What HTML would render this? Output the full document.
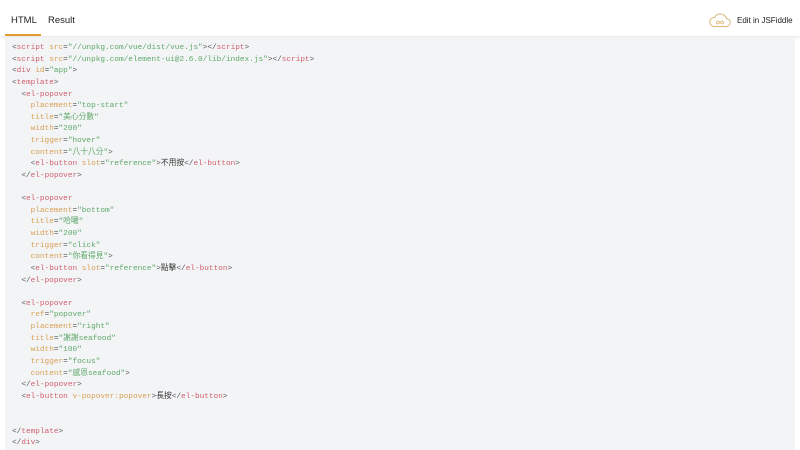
<!DOCTYPE html>
<html><head><meta charset="utf-8"><style>
html,body{margin:0;padding:0;width:800px;height:450px;overflow:hidden;background:#fff;font-family:"Liberation Sans",sans-serif}
.hdr{position:absolute;left:0;top:0;width:800px;height:36px;background:#fff;box-shadow:0 1px 3px rgba(0,0,0,.12)}
.tab{position:absolute;top:15px;font-size:9.5px;color:#222}
.ul{position:absolute;left:5px;top:34px;width:36px;height:2px;background:#e0a030}
.edit{position:absolute;left:737px;top:16px;font-size:8px;color:#222}
.panel{position:absolute;left:5px;top:37px;width:790px;height:413px;background:#f3f4f6}
pre{position:absolute;left:12px;top:43px;margin:0;font-family:"Liberation Mono","Noto Sans CJK TC",monospace;font-size:7.75px;line-height:11.62px;color:#333}
.t{color:#d0606e}.a{color:#d9a055}.s{color:#5ea86a}.p{color:#555}
</style></head><body>
<div class="hdr"></div>
<div class="tab" style="left:11px">HTML</div>
<div class="tab" style="left:48px">Result</div>
<div class="ul"></div>
<svg style="position:absolute;left:709px;top:12px" width="22" height="16" viewBox="0 0 22 16"><path d="M5 14.5 H17 A4 4 0 0 0 17.5 6.5 A6.5 6.5 0 0 0 5.5 5.5 A4.5 4.5 0 0 0 5 14.5 Z" fill="none" stroke="#d9b878" stroke-width="1"/><path d="M11 10.5 C9.5 8.5 7.5 8.8 7.5 10.5 C7.5 12.2 9.5 12.5 11 10.5 C12.5 8.5 14.5 8.8 14.5 10.5 C14.5 12.2 12.5 12.5 11 10.5Z" fill="none" stroke="#d9b878" stroke-width="0.9"/></svg>
<div class="edit">Edit in JSFiddle</div>
<div class="panel"></div>
<pre><span class="p">&lt;</span><span class="t">script</span> <span class="a">src</span><span class="p">=</span><span class="s">"//unpkg.com/vue/dist/vue.js"</span><span class="p">&gt;&lt;/</span><span class="t">script</span><span class="p">&gt;</span>
<span class="p">&lt;</span><span class="t">script</span> <span class="a">src</span><span class="p">=</span><span class="s">"//unpkg.com/element-ui@2.6.0/lib/index.js"</span><span class="p">&gt;&lt;/</span><span class="t">script</span><span class="p">&gt;</span>
<span class="p">&lt;</span><span class="t">div</span> <span class="a">id</span><span class="p">=</span><span class="s">"app"</span><span class="p">&gt;</span>
<span class="p">&lt;</span><span class="t">template</span><span class="p">&gt;</span>
  <span class="p">&lt;</span><span class="t">el-popover</span>
    <span class="a">placement</span><span class="p">=</span><span class="s">"top-start"</span>
    <span class="a">title</span><span class="p">=</span><span class="s">"美心分數"</span>
    <span class="a">width</span><span class="p">=</span><span class="s">"200"</span>
    <span class="a">trigger</span><span class="p">=</span><span class="s">"hover"</span>
    <span class="a">content</span><span class="p">=</span><span class="s">"八十八分"</span><span class="p">&gt;</span>
    <span class="p">&lt;</span><span class="t">el-button</span> <span class="a">slot</span><span class="p">=</span><span class="s">"reference"</span><span class="p">&gt;</span>不用按<span class="p">&lt;/</span><span class="t">el-button</span><span class="p">&gt;</span>
  <span class="p">&lt;/</span><span class="t">el-popover</span><span class="p">&gt;</span>

  <span class="p">&lt;</span><span class="t">el-popover</span>
    <span class="a">placement</span><span class="p">=</span><span class="s">"bottom"</span>
    <span class="a">title</span><span class="p">=</span><span class="s">"哈囉"</span>
    <span class="a">width</span><span class="p">=</span><span class="s">"200"</span>
    <span class="a">trigger</span><span class="p">=</span><span class="s">"click"</span>
    <span class="a">content</span><span class="p">=</span><span class="s">"你看得見"</span><span class="p">&gt;</span>
    <span class="p">&lt;</span><span class="t">el-button</span> <span class="a">slot</span><span class="p">=</span><span class="s">"reference"</span><span class="p">&gt;</span>點擊<span class="p">&lt;/</span><span class="t">el-button</span><span class="p">&gt;</span>
  <span class="p">&lt;/</span><span class="t">el-popover</span><span class="p">&gt;</span>

  <span class="p">&lt;</span><span class="t">el-popover</span>
    <span class="a">ref</span><span class="p">=</span><span class="s">"popover"</span>
    <span class="a">placement</span><span class="p">=</span><span class="s">"right"</span>
    <span class="a">title</span><span class="p">=</span><span class="s">"謝謝seafood"</span>
    <span class="a">width</span><span class="p">=</span><span class="s">"100"</span>
    <span class="a">trigger</span><span class="p">=</span><span class="s">"focus"</span>
    <span class="a">content</span><span class="p">=</span><span class="s">"感恩seafood"</span><span class="p">&gt;</span>
  <span class="p">&lt;/</span><span class="t">el-popover</span><span class="p">&gt;</span>
  <span class="p">&lt;</span><span class="t">el-button</span> <span class="a">v-popover:popover</span><span class="p">&gt;</span>長按<span class="p">&lt;/</span><span class="t">el-button</span><span class="p">&gt;</span>


<span class="p">&lt;/</span><span class="t">template</span><span class="p">&gt;</span>
<span class="p">&lt;/</span><span class="t">div</span><span class="p">&gt;</span></pre>
</body></html>
